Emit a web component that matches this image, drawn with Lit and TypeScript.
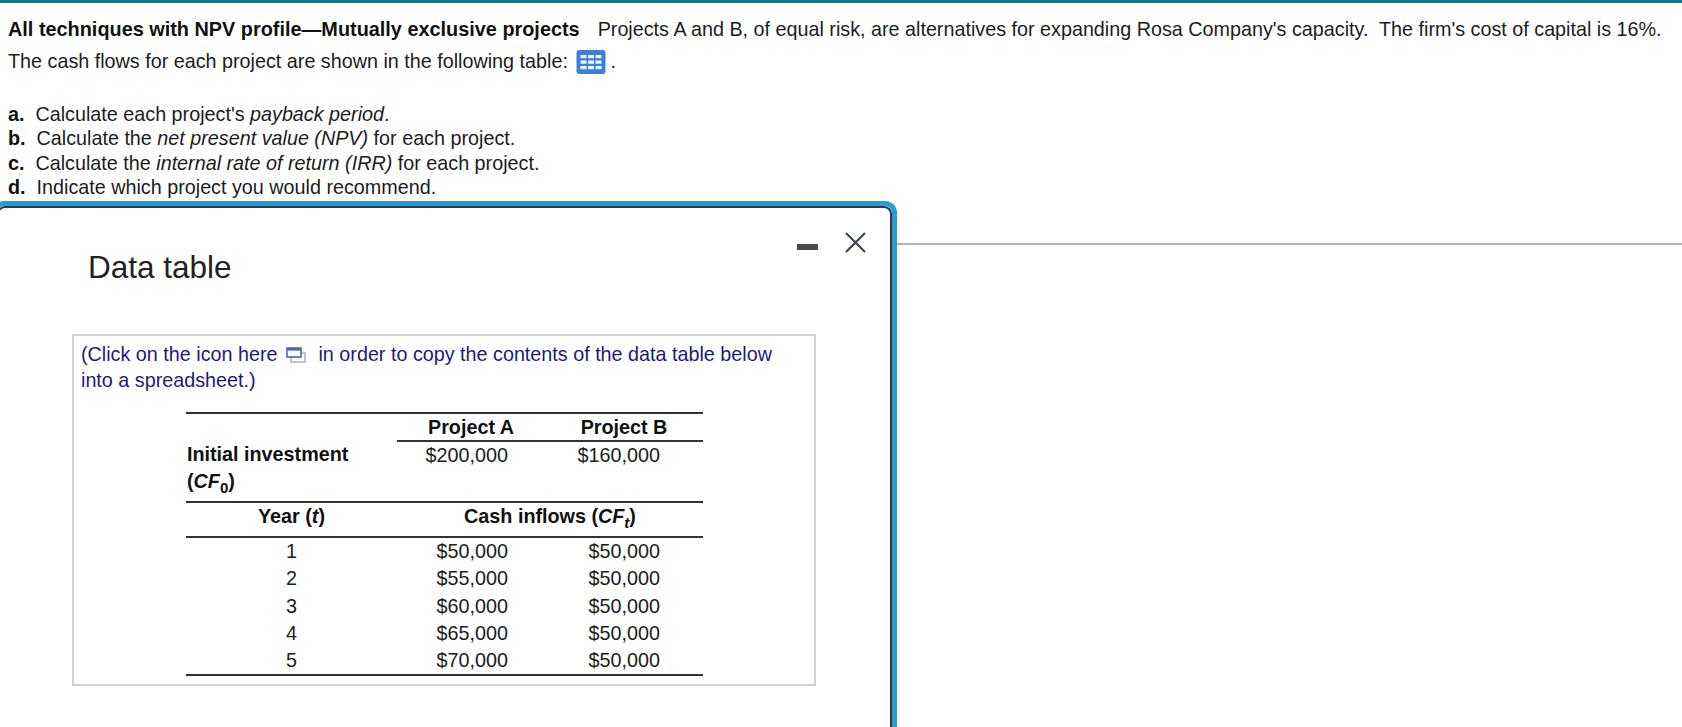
import { LitElement, html, css, svg } from "lit";
import { customElement } from "lit/decorators.js";

const rows = [
  ["1", "$50,000", "$50,000"],
  ["2", "$55,000", "$50,000"],
  ["3", "$60,000", "$50,000"],
  ["4", "$65,000", "$50,000"],
  ["5", "$70,000", "$50,000"],
];

@customElement("app-root")
export class AppRoot extends LitElement {
  static styles = css`
    :host { display: block; width: 1682px; height: 727px; overflow: hidden; background: #fff; color: #1c1c1c;
      font-family: "Liberation Sans", Arial, sans-serif; font-size: 19.75px; }
    .topbar { height: 3px; background: #0f7391; }
    .intro { padding: 11px 8px 0; line-height: 31.5px; height: 75px; box-sizing: content-box; }
    .intro b { color: #111; margin-right: 18px; font-size: 19.87px; }
    .tblicon { display: inline-block; vertical-align: -6px; margin: 0 4px 0 3px; width: 30px; height: 24px; }
    .tasks { margin: 13px 0 0; padding: 0 0 0 8px; list-style: none; line-height: 24.3px; height: 99px; }
    .tasks b { display: inline-block; margin-right: 11px; color: #111; }
    .stage { display: flex; align-items: flex-start; }
    .modal { box-sizing: border-box; width: 905px; margin-left: -8px; height: 560px; flex: none; background: #fff;
      border: 5px solid #2a9bcf; border-bottom: none; border-radius: 12px 12px 0 0; position: relative; }
    .inner { height: 100%; box-sizing: border-box; border: 2px solid #2d3a45; border-bottom: none; border-radius: 8px 8px 0 0; padding: 41px 0 0 89px; }
    .rule { flex: 1; height: 2px; margin-top: 42px; background: #b4b4b4; }
    .controls { position: absolute; top: 26px; right: 26px; display: flex; align-items: center; gap: 27px; }
    .min { width: 21px; height: 6px; margin-top: 9px; background: #4a4a4f; }
    h1 { margin: 0; font-size: 31.5px; font-weight: 400; line-height: 36px; color: #222; }
    .box { box-sizing: border-box; width: 744px; height: 352px; margin: 49px 0 0 -16px; border: 2px solid #d2d2d2; padding: 5px 7px 0; }
    .note { color: #1f1a78; line-height: 26px; margin: 0; width: 710px; }
    .copy { display: inline-block; width: 20px; height: 16px; vertical-align: -2px; margin: 0 7px 0 3px; }
    table { border-collapse: collapse; margin: 19px 0 0 105px; width: 517px; table-layout: fixed; line-height: 27.3px; color: #1c1c1c; }
    th, td { padding: 0; font-weight: 400; }
    .c1 { width: 211px; } .c2 { width: 148px; } .c3 { width: 158px; }
    .top th { border-top: 2px solid #333; }
    .hd th { font-weight: 700; text-align: center; color: #111; border-bottom: 2px solid #333; height: 26px; line-height: 25px; }
    .hd th:first-child { border-bottom: none; }
    .init td { vertical-align: top; height: 59px; }
    .label { font-weight: 700; color: #111; text-align: left; line-height: 27px; padding-left: 1px; }
    .val { text-align: right; }
    .a { padding-right: 37px; } .b { padding-right: 43px; }
    .sec th { font-weight: 700; color: #111; text-align: center; vertical-align: top; border-top: 2px solid #333; border-bottom: 2px solid #333; height: 33px; line-height: 26px; }
    .yr { text-align: center; }
    .last td { border-bottom: 2px solid #333; }
    i { font-style: italic; }
    sub { font-size: 15px; line-height: 0; }
  `;

  render() {
    return html`
      <div class="topbar"></div>
      <div class="intro">
        <b>All techniques with NPV profile—Mutually exclusive projects</b>Projects A and B, of equal risk, are alternatives for expanding Rosa Company's capacity.&nbsp; The firm's cost of capital is 16%.<br />
        The cash flows for each project are shown in the following table:
        <svg class="tblicon" viewBox="0 0 29 24">
          <rect x="0" y="0" width="29" height="24" rx="3" fill="#3b7fdc" />
          ${[5, 10.5, 16].map((y) => [4, 11.5, 19].map((x) => svg`<rect x=${x} y=${y} width="6" height="3.2" fill="#fff" opacity=".92" />`))}
        </svg>.
      </div>
      <ol class="tasks">
        <li><b>a.</b>Calculate each project's <i>payback period</i>.</li>
        <li><b>b.</b>Calculate the <i>net present value (NPV)</i> for each project.</li>
        <li><b>c.</b>Calculate the <i>internal rate of return (IRR)</i> for each project.</li>
        <li><b>d.</b>Indicate which project you would recommend.</li>
      </ol>
      <div class="stage">
        <section class="modal">
          <div class="inner">
            <h1>Data table</h1>
            <div class="controls">
              <div class="min"></div>
              <svg width="21" height="21" viewBox="0 0 21 21"><path d="M1 1 L20 20 M20 1 L1 20" stroke="#3f4650" stroke-width="2.2" fill="none" /></svg>
            </div>
            <div class="box">
              <p class="note">(Click on the icon here
                <svg class="copy" viewBox="0 0 20 16">
                  <rect x="5" y="6" width="14" height="9" fill="none" stroke="#a9aed2" stroke-width="1.5" />
                  <rect x="1" y="1" width="14" height="9" fill="#fff" stroke="#4a6aa8" stroke-width="1.6" />
                  <rect x="1" y="1" width="14" height="2.6" fill="#4a6aa8" />
                </svg>
                in order to copy the contents of the data table below into a spreadsheet.)</p>
              <table>
                <colgroup><col class="c1" /><col class="c2" /><col class="c3" /></colgroup>
                <tbody>
                  <tr class="hd top"><th></th><th>Project A</th><th>Project B</th></tr>
                  <tr class="init">
                    <td class="label">Initial investment<br />(<i>CF</i><sub>0</sub>)</td>
                    <td class="val a">$200,000</td>
                    <td class="val b">$160,000</td>
                  </tr>
                  <tr class="sec"><th>Year (<i>t</i>)</th><th colspan="2">Cash inflows (<i>CF<sub>t</sub></i>)</th></tr>
                  ${rows.map((r, i) => html`
                    <tr class=${i === rows.length - 1 ? "last" : ""}>
                      <td class="yr">${r[0]}</td>
                      <td class="val a">${r[1]}</td>
                      <td class="val b">${r[2]}</td>
                    </tr>`)}
                </tbody>
              </table>
            </div>
          </div>
        </section>
        <div class="rule"></div>
      </div>
    `;
  }
}
